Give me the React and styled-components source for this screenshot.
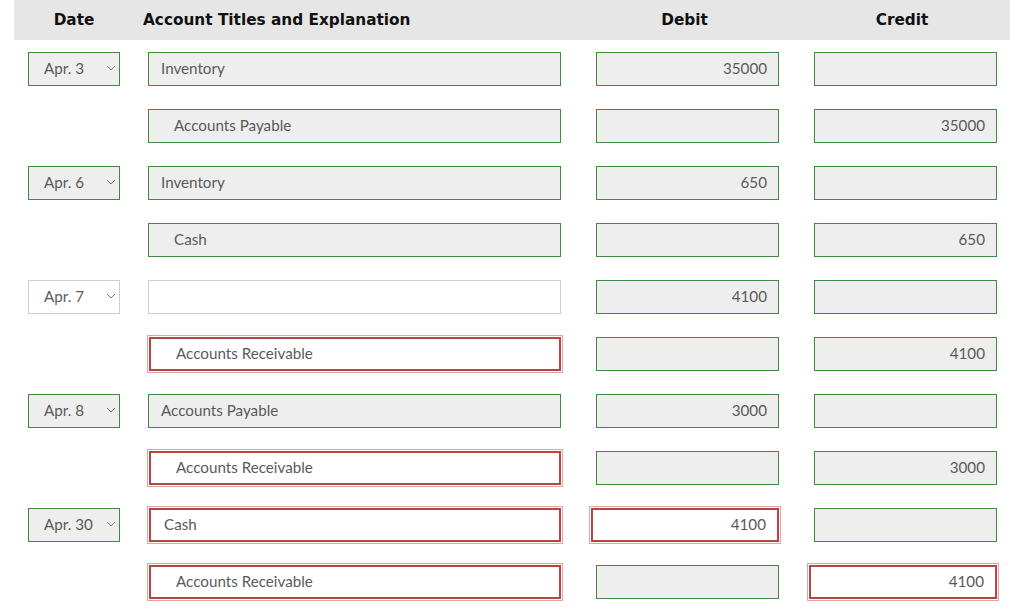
import React from "react"
import styled, { createGlobalStyle } from 'styled-components'

const GlobalStyle = createGlobalStyle`
    body {
        margin: 0;
        background: #ffffff;
        font-family: 'Lato', 'Liberation Sans', sans-serif;
    }
`

const Page = styled.div`
    padding: 0 14px;
    width: 1024px;
    box-sizing: border-box;
`

const Grid = styled.div`
    display: grid;
    grid-template-columns: 106px 441px 218px 218px;
    align-items: center;
`

const HeaderRow = styled(Grid)`
    height: 40px;
    box-sizing: border-box;
    background: #e6e6e6;
`

const HeadCell = styled.div`
    font-family: 'DejaVu Sans', 'Liberation Sans', sans-serif;
    font-weight: 700;
    font-size: 15.3px;
    color: #111;
    justify-self: end;
    width: ${p => p.w}px;
    padding-right: ${p => p.shift || 0}px;
    box-sizing: border-box;
    text-align: ${p => p.align || 'center'};
`

const Row = styled(Grid)`
    height: 57px;
`

const Cell = styled.div`
    justify-self: end;
`

const Field = styled.div`
    box-sizing: border-box;
    height: 34px;
    width: ${p => p.w}px;
    display: flex;
    align-items: center;
    justify-content: ${p => p.right ? 'flex-end' : 'flex-start'};
    padding: 0 ${p => p.right ? 11 : 0}px 1px ${p => p.pad || 0}px;
    font-size: 15.2px;
    color: #5a5a5a;
    border: 1px solid #3f8a3f;
    background: #eeeeee;

    ${p => p.state === 'blank' && `
        border-color: #cfcfcf;
        background: #ffffff;
    `}

    ${p => p.state === 'error' && `
        border: 2px solid #b5453f;
        background: #ffffff;
        box-shadow: 0 0 0 1px #ffffff, 0 0 0 2px #dba6a3;
    `}
`

const Select = styled(Field)`
    justify-content: space-between;
    padding: 0 3px 1px 15px;
`

function Chevron() {
    return (
        <svg width="10" height="6" viewBox="0 0 10 6">
            <polyline points="1,1 5,5 9,1" fill="none" stroke="#777" strokeWidth="1" />
        </svg>
    )
}

const rows = [
    { date: 'Apr. 3', acct: 'Inventory', debit: '35000' },
    { acct: 'Accounts Payable', indent: true, credit: '35000' },
    { date: 'Apr. 6', acct: 'Inventory', debit: '650' },
    { acct: 'Cash', indent: true, credit: '650' },
    { date: 'Apr. 7', dateState: 'blank', acct: '', acctState: 'blank', debit: '4100' },
    { acct: 'Accounts Receivable', indent: true, acctState: 'error', credit: '4100' },
    { date: 'Apr. 8', acct: 'Accounts Payable', debit: '3000' },
    { acct: 'Accounts Receivable', indent: true, acctState: 'error', credit: '3000' },
    { date: 'Apr. 30', acct: 'Cash', acctState: 'error', debit: '4100', debitState: 'error' },
    { acct: 'Accounts Receivable', indent: true, acctState: 'error', credit: '4100', creditState: 'error' },
]

function App() {
    return (
        <Page>
            <GlobalStyle />
            <HeaderRow>
                <HeadCell w={92}>Date</HeadCell>
                <HeadCell w={418} align="left">Account Titles and Explanation</HeadCell>
                <HeadCell w={183} shift={6}>Debit</HeadCell>
                <HeadCell w={183} shift={7}>Credit</HeadCell>
            </HeaderRow>
            {rows.map((r, i) => {
                const acctErr = r.acctState === 'error'
                let pad = r.indent ? 25 : 12
                if (acctErr) pad = r.indent ? 25 : 13
                return (
                    <Row key={i}>
                        <Cell>
                            {r.date && (
                                <Select w={92} state={r.dateState}>
                                    <span>{r.date}</span>
                                    <Chevron />
                                </Select>
                            )}
                        </Cell>
                        <Cell>
                            <Field w={acctErr ? 412 : 413} pad={pad} state={r.acctState}>{r.acct}</Field>
                        </Cell>
                        <Cell>
                            <Field w={r.debitState === 'error' ? 188 : 183} right state={r.debitState}>{r.debit}</Field>
                        </Cell>
                        <Cell>
                            <Field w={r.creditState === 'error' ? 188 : 183} right state={r.creditState}>{r.credit}</Field>
                        </Cell>
                    </Row>
                )
            })}
        </Page>
    )
}

export default App
